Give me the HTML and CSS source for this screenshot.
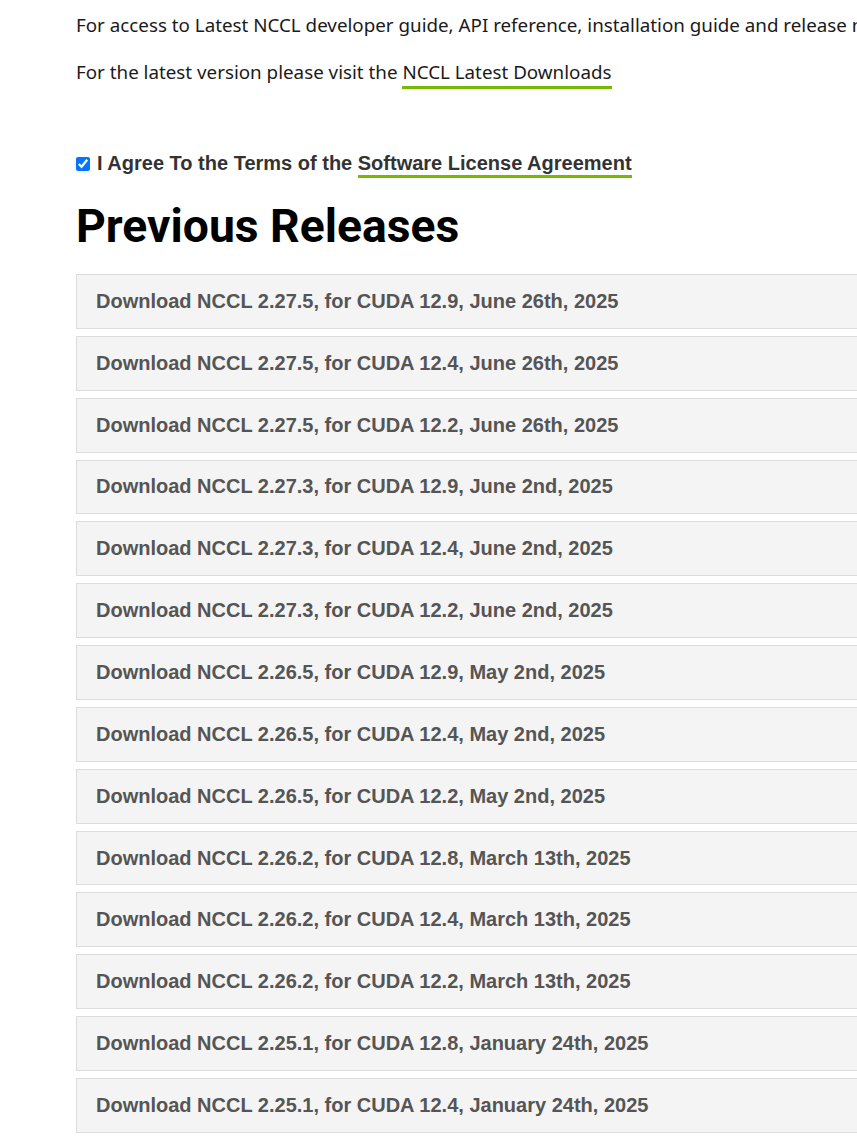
FILE: index.html
```html
<!DOCTYPE html>
<html lang="en">
<head>
	<title>NCCL Legacy Downloads</title>
	<meta charset="utf-8">
	<meta name="viewport" content="width=device-width, initial-scale=1">
	<link rel="stylesheet" href="styles.css">
</head>
<body>
	<div class="main">
		<p class="intro">For access to Latest NCCL developer guide, API reference, installation guide and release notes, please visit the NCCL Documentation page.</p>
		<p class="intro">For the latest version please visit the <a href="#" class="green-link">NCCL Latest Downloads</a></p>

		<div class="agree">
			<input type="checkbox" id="agree" checked>
			<label for="agree">I Agree To the Terms of the <a href="#" class="green-link">Software License Agreement</a></label>
		</div>

		<h1 class="title">Previous Releases</h1>

		<div class="releases">
			<div class="release">Download NCCL 2.27.5, for CUDA 12.9, June 26th, 2025</div>
			<div class="release">Download NCCL 2.27.5, for CUDA 12.4, June 26th, 2025</div>
			<div class="release">Download NCCL 2.27.5, for CUDA 12.2, June 26th, 2025</div>
			<div class="release">Download NCCL 2.27.3, for CUDA 12.9, June 2nd, 2025</div>
			<div class="release">Download NCCL 2.27.3, for CUDA 12.4, June 2nd, 2025</div>
			<div class="release">Download NCCL 2.27.3, for CUDA 12.2, June 2nd, 2025</div>
			<div class="release">Download NCCL 2.26.5, for CUDA 12.9, May 2nd, 2025</div>
			<div class="release">Download NCCL 2.26.5, for CUDA 12.4, May 2nd, 2025</div>
			<div class="release">Download NCCL 2.26.5, for CUDA 12.2, May 2nd, 2025</div>
			<div class="release">Download NCCL 2.26.2, for CUDA 12.8, March 13th, 2025</div>
			<div class="release">Download NCCL 2.26.2, for CUDA 12.4, March 13th, 2025</div>
			<div class="release">Download NCCL 2.26.2, for CUDA 12.2, March 13th, 2025</div>
			<div class="release">Download NCCL 2.25.1, for CUDA 12.8, January 24th, 2025</div>
			<div class="release">Download NCCL 2.25.1, for CUDA 12.4, January 24th, 2025</div>
			<div class="release">Download NCCL 2.25.1, for CUDA 12.2, January 24th, 2025</div>
		</div>
	</div>
</body>
</html>
```

FILE: styles.css
```css
body {
	margin: 0;
	padding: 0;
	background: #fff;
	color: #1a1a1a;
	font-family: "Noto Sans", "Liberation Sans", sans-serif;
}

.main {
	width: 1100px;
	padding: 0 0 40px 76px;
}

.intro {
	margin: 0;
	font-size: 18.8px;
	line-height: 47px;
	white-space: nowrap;
}

.intro:first-child {
	margin-top: 2px;
}

.green-link {
	color: #1a1a1a;
	text-decoration: none;
	border-bottom: 3px solid #76b900;
	padding-bottom: 1px;
}

.agree {
	margin-top: 56px;
	display: flex;
	align-items: center;
	font-family: "Liberation Sans", Arial, sans-serif;
	font-weight: bold;
	font-size: 20px;
	color: #333;
}

.agree input {
	width: 14px;
	height: 14px;
	margin: 0 7px 0 0;
	accent-color: #0075ff;
}

.agree .green-link {
	color: #333;
}

.title {
	margin: 25px 0 22px;
	font-family: Roboto, "Liberation Sans", sans-serif;
	font-weight: bold;
	font-size: 46.3px;
	line-height: 52px;
	color: #000;
}

.releases {
	display: flex;
	flex-direction: column;
	gap: 7px;
}

.release {
	height: 52.85px;
	display: flex;
	align-items: center;
	padding-left: 19px;
	background: #f4f4f4;
	border: 1px solid #dcdcdc;
	font-family: "Liberation Sans", Arial, sans-serif;
	font-weight: bold;
	font-size: 20px;
	color: #555;
}
```
